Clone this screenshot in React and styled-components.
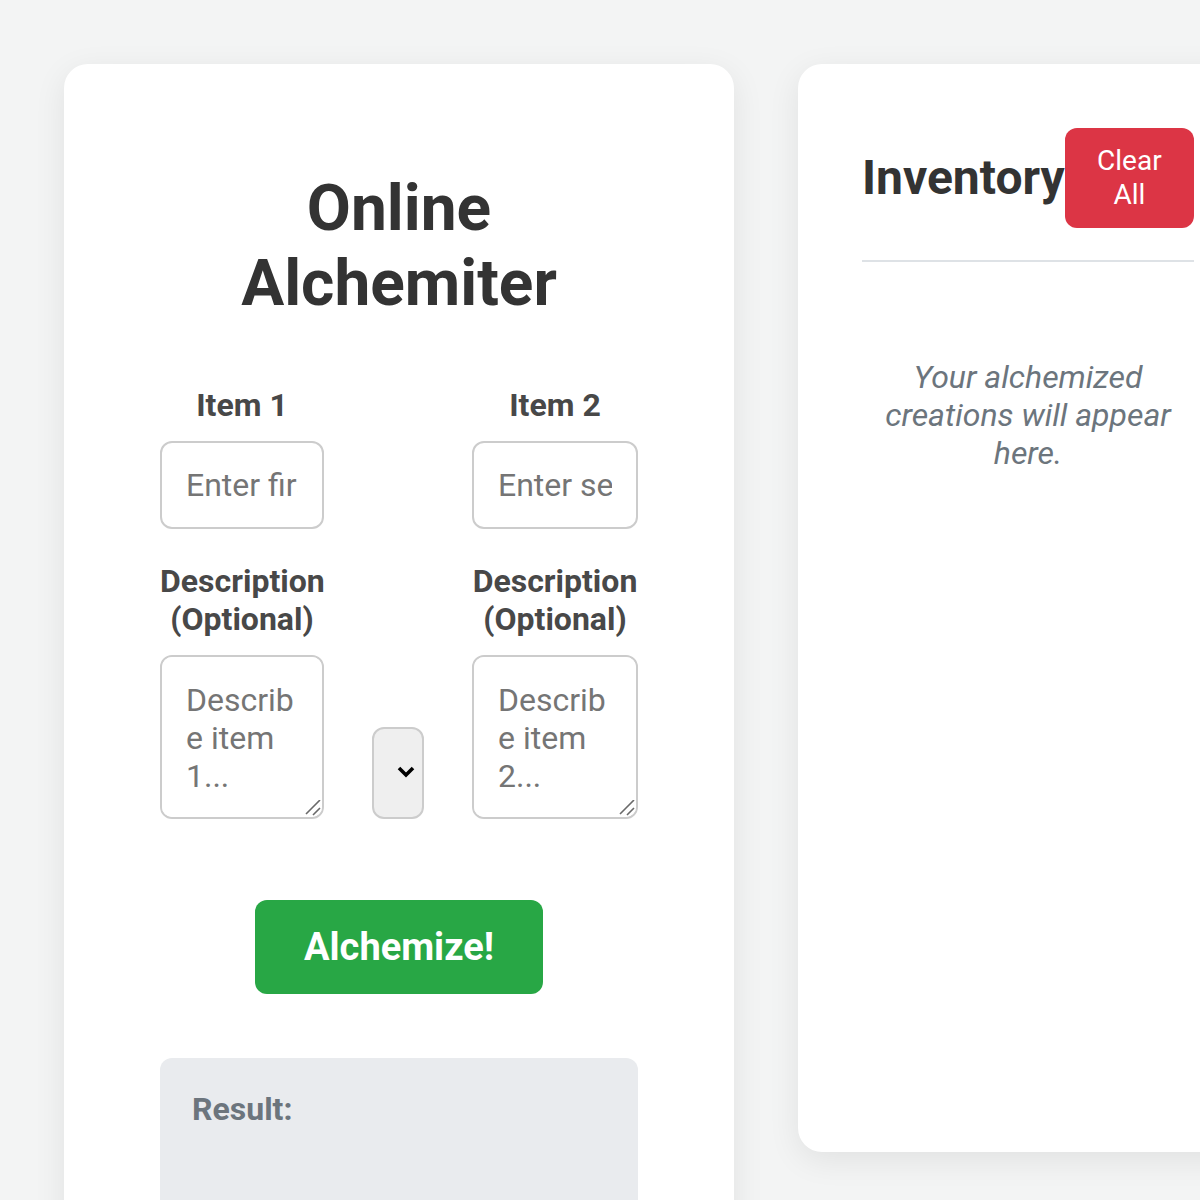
import React, { useState } from 'react';
import styled, { createGlobalStyle } from 'styled-components';

const GlobalStyle = createGlobalStyle`
  html, body {
    margin: 0;
    padding: 0;
    overflow: hidden;
    background-color: #f3f4f4;
    font-family: Roboto, "Liberation Sans", Arial, sans-serif;
  }
  * {
    box-sizing: border-box;
  }
`;

const Page = styled.div`
  display: flex;
  align-items: flex-start;
  gap: 64px;
  padding: 64px;
  width: max-content;
`;

const Card = styled.div`
  flex-shrink: 0;
  background-color: #fff;
  border-radius: 24px;
  box-shadow: 0 8px 32px rgba(0, 0, 0, 0.08);
`;

const AlchemiterCard = styled(Card)`
  width: 670px;
  padding: 64px 96px 64px 96px;
`;

const InventoryCard = styled(Card)`
  width: 460px;
  height: 1088px;
  padding: 64px;
`;

const Title = styled.h1`
  margin: 43px 0 65px 0;
  font-size: 64px;
  line-height: 75px;
  font-weight: 700;
  color: #333;
  text-align: center;
`;

const FormGrid = styled.div`
  display: grid;
  grid-template-columns: 164px 52px 166px;
  column-gap: 48px;
  align-items: end;
`;

const ItemGroup = styled.div`
  display: flex;
  flex-direction: column;
  gap: 33px;
`;

const Field = styled.div`
  display: flex;
  flex-direction: column;
`;

const Label = styled.label`
  margin-bottom: 17px;
  font-size: 32px;
  line-height: 38px;
  font-weight: 700;
  color: #484848;
  text-align: center;
`;

const TextInput = styled.input`
  width: 100%;
  height: 88px;
  padding: 24px;
  border: 2px solid #ccc;
  border-radius: 12px;
  font-family: inherit;
  font-size: 32px;
  color: #333;
  outline: none;

  &::placeholder {
    color: #757575;
  }
`;

const AreaWrap = styled.div`
  position: relative;
`;

const TextArea = styled.textarea`
  display: block;
  width: 100%;
  height: 164px;
  padding: 24px;
  border: 2px solid #ccc;
  border-radius: 12px;
  font-family: inherit;
  font-size: 32px;
  line-height: 38px;
  color: #333;
  resize: none;
  outline: none;

  &::placeholder {
    color: #757575;
  }
`;

const Grip = styled.svg`
  position: absolute;
  right: 3px;
  bottom: 3px;
  pointer-events: none;
`;

const SelectWrap = styled.div`
  position: relative;
  width: 52px;
  height: 92px;
`;

const Select = styled.select`
  appearance: none;
  width: 100%;
  height: 100%;
  padding: 0;
  background-color: #efefef;
  border: 2px solid #ccc;
  border-radius: 12px;
  font-family: inherit;
  font-size: 28px;
  outline: none;
`;

const Chevron = styled.svg`
  position: absolute;
  top: 39px;
  right: 9px;
  pointer-events: none;
`;

const Actions = styled.div`
  display: flex;
  justify-content: center;
  margin: 81px 0 64px 0;
`;

const AlchemizeButton = styled.button`
  padding: 24px 49px;
  border: none;
  border-radius: 12px;
  background-color: #28a745;
  color: #fff;
  font-family: inherit;
  font-size: 38px;
  line-height: 46px;
  font-weight: 700;
  cursor: pointer;
`;

const ResultBox = styled.div`
  min-height: 260px;
  padding: 32px;
  border-radius: 12px;
  background-color: #e9ebee;
`;

const ResultLabel = styled.h3`
  margin: 0;
  font-size: 32px;
  line-height: 38px;
  font-weight: 700;
  color: #6c757d;
`;

const InventoryHeader = styled.div`
  display: flex;
  justify-content: space-between;
  align-items: center;
  padding-bottom: 32px;
  border-bottom: 2px solid #dee2e6;
`;

const InventoryTitle = styled.h2`
  margin: 0;
  font-size: 48px;
  line-height: 56px;
  font-weight: 700;
  color: #333;
`;

const ClearButton = styled.button`
  padding: 16px 32px;
  border: none;
  border-radius: 12px;
  background-color: #dc3545;
  color: #fff;
  font-family: inherit;
  font-size: 28px;
  line-height: 34px;
  cursor: pointer;
`;

const EmptyText = styled.p`
  margin: 96px 0 0 0;
  font-size: 32px;
  line-height: 38px;
  font-style: italic;
  color: #6c757d;
  text-align: center;
`;

const ResizeGrip = () => (
  <Grip width="16" height="16" viewBox="0 0 16 16">
    <path d="M1 14 L15 0 M8 15 L15 8" stroke="#6a6a6a" strokeWidth="1.6" />
  </Grip>
);

const App = () => {
  const [item1, setItem1] = useState('');
  const [item2, setItem2] = useState('');
  const [desc1, setDesc1] = useState('');
  const [desc2, setDesc2] = useState('');
  const [operation, setOperation] = useState('');

  return (
    <>
      <GlobalStyle />
      <Page>
        <AlchemiterCard>
          <Title>Online Alchemiter</Title>
          <FormGrid>
            <ItemGroup>
              <Field>
                <Label>Item 1</Label>
                <TextInput
                  placeholder="Enter first item..."
                  value={item1}
                  onChange={(e) => setItem1(e.target.value)}
                />
              </Field>
              <Field>
                <Label>Description (Optional)</Label>
                <AreaWrap>
                  <TextArea
                    placeholder="Describe item 1..."
                    value={desc1}
                    onChange={(e) => setDesc1(e.target.value)}
                  />
                  <ResizeGrip />
                </AreaWrap>
              </Field>
            </ItemGroup>

            <SelectWrap>
              <Select value={operation} onChange={(e) => setOperation(e.target.value)}>
                <option value=""></option>
                <option value="and">&amp;&amp;</option>
                <option value="or">||</option>
              </Select>
              <Chevron width="18" height="12" viewBox="0 0 18 12">
                <path d="M2 2 L9 9 L16 2" fill="none" stroke="#000" strokeWidth="3.6" />
              </Chevron>
            </SelectWrap>

            <ItemGroup>
              <Field>
                <Label>Item 2</Label>
                <TextInput
                  placeholder="Enter second item..."
                  value={item2}
                  onChange={(e) => setItem2(e.target.value)}
                />
              </Field>
              <Field>
                <Label>Description (Optional)</Label>
                <AreaWrap>
                  <TextArea
                    placeholder="Describe item 2..."
                    value={desc2}
                    onChange={(e) => setDesc2(e.target.value)}
                  />
                  <ResizeGrip />
                </AreaWrap>
              </Field>
            </ItemGroup>
          </FormGrid>

          <Actions>
            <AlchemizeButton type="button">Alchemize!</AlchemizeButton>
          </Actions>

          <ResultBox>
            <ResultLabel>Result:</ResultLabel>
          </ResultBox>
        </AlchemiterCard>

        <InventoryCard>
          <InventoryHeader>
            <InventoryTitle>Inventory</InventoryTitle>
            <ClearButton type="button">Clear All</ClearButton>
          </InventoryHeader>
          <EmptyText>Your alchemized creations will appear here.</EmptyText>
        </InventoryCard>
      </Page>
    </>
  );
};

export default App;
